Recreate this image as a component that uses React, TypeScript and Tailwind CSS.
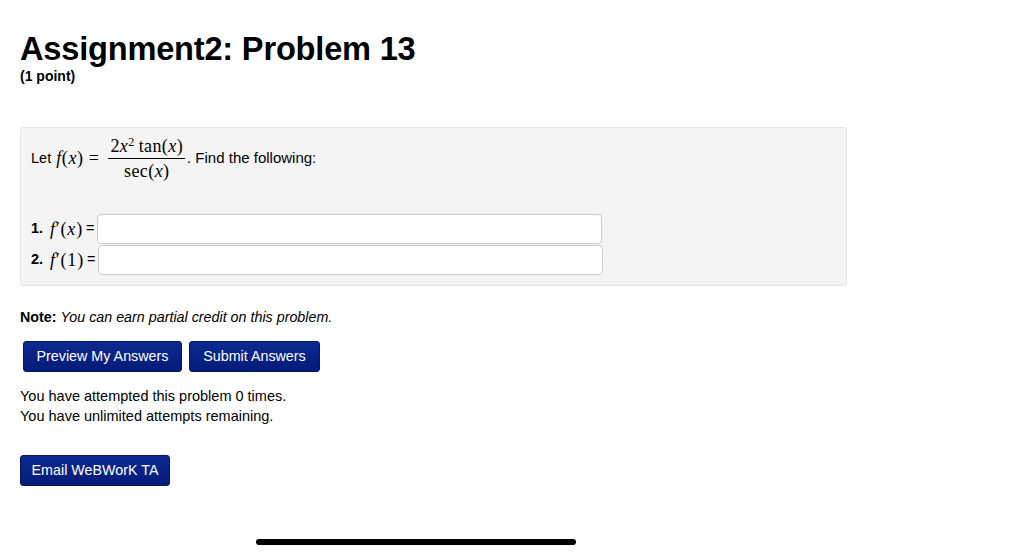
const sans = { fontFamily: '"Liberation Sans", Arial, sans-serif' }
const serif = { fontFamily: '"Liberation Serif", "Times New Roman", serif' }

function V({ children }: { children: React.ReactNode }) {
  return <span className="italic">{children}</span>
}

function Btn({ children, className = '' }: { children: React.ReactNode; className?: string }) {
  return (
    <button
      className={`h-[31px] whitespace-nowrap rounded-[3px] border border-[#06185e] bg-gradient-to-b from-[#0c2a93] to-[#041b78] text-[14.3px] text-white ${className}`}
    >
      {children}
    </button>
  )
}

export default function App() {
  return (
    <div className="relative h-[553px] w-[1024px] overflow-hidden bg-white text-black" style={sans}>
      <div className="px-[20px] pt-[30px]">
        <h1 className="text-[32.6px] font-bold leading-[38px] tracking-[-0.2px]">Assignment2: Problem 13</h1>
        <div className="text-[14px] font-bold leading-[16px]">(1 point)</div>

        <div className="mt-[43px] h-[159px] w-[827px] rounded-[3px] border border-[#e6e6e6] bg-[#f4f4f4] px-[10px] pt-[7px]">
          <div className="flex items-center text-[14.5px]">
            <span className="mr-[5px]">Let</span>
            <span className="text-[18px] tracking-[0.6px]" style={serif}>
              <V>f</V>(<V>x</V>)&nbsp;=
            </span>
            <span className="ml-[9px] inline-flex flex-col items-center text-[18px] leading-[22px] tracking-[0.4px]" style={serif}>
              <span className="border-b border-black px-[2px] pb-[1px]">
                2<V>x</V>
                <sup className="text-[12px]">2</sup>&thinsp;tan(<V>x</V>)
              </span>
              <span className="pt-[1px]">
                sec(<V>x</V>)
              </span>
            </span>
            <span className="ml-[2px] text-[15px]">. Find the following:</span>
          </div>

          <div className="mt-[32px] flex flex-col gap-[1px] text-[14.5px]">
            <div className="flex h-[30px] items-center">
              <span className="w-[19px] font-bold">1.</span>
              <span className="mr-[3px] text-[18px] tracking-[0.8px]" style={serif}>
                <V>f</V>′(<V>x</V>)
              </span>
              <span>=</span>
              <input className="ml-[3px] h-[30px] w-[505px] rounded-[4px] border border-[#cccccc] bg-white" />
            </div>
            <div className="flex h-[30px] items-center">
              <span className="w-[19px] font-bold">2.</span>
              <span className="mr-[3px] text-[18px] tracking-[0.8px]" style={serif}>
                <V>f</V>′(1)
              </span>
              <span>=</span>
              <input className="ml-[3px] h-[30px] w-[505px] rounded-[4px] border border-[#cccccc] bg-white" />
            </div>
          </div>
        </div>

        <p className="mt-[22px] text-[14.3px] leading-[18px]">
          <span className="font-bold">Note:</span> <span className="italic">You can earn partial credit on this problem.</span>
        </p>

        <div className="ml-[3px] mt-[15px] flex gap-[7px]">
          <Btn className="w-[159px]">Preview My Answers</Btn>
          <Btn className="w-[131px]">Submit Answers</Btn>
        </div>

        <div className="mt-[14px] text-[14.5px] leading-[20px]">
          <p>You have attempted this problem 0 times.</p>
          <p>You have unlimited attempts remaining.</p>
        </div>

        <Btn className="mt-[29px] w-[150px]">Email WeBWorK TA</Btn>
      </div>

      <div className="absolute left-[256px] top-[539px] h-[6px] w-[320px] rounded-full bg-black" />
    </div>
  )
}
